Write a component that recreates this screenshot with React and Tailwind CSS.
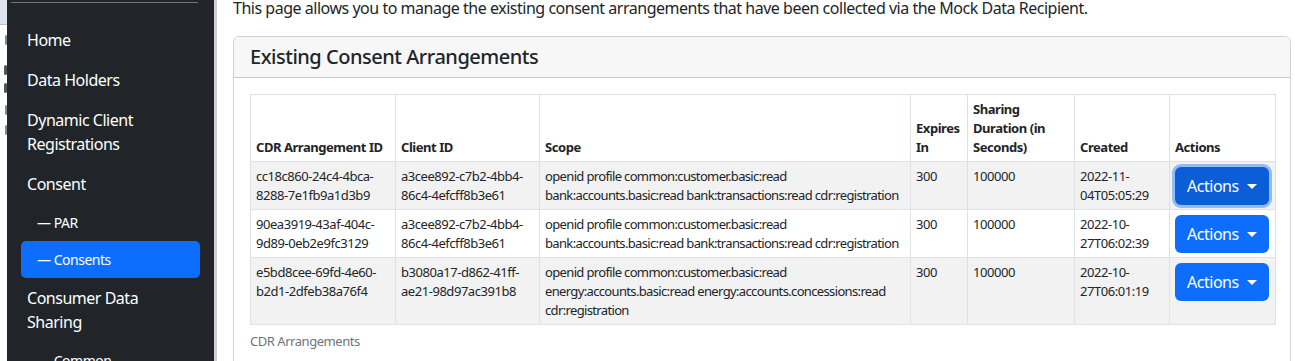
import React from "react";

const font = { fontFamily: '"Noto Sans", "Open Sans", sans-serif' };

const rows = [
  {
    id: "cc18c860",
    idLines: ["cc18c860-24c4-4bca-", "8288-7e1fb9a1d3b9"],
    client: ["a3cee892-c7b2-4bb4-", "86c4-4efcff8b3e61"],
    scope: ["openid profile common:customer.basic:read", "bank:accounts.basic:read bank:transactions:read cdr:registration"],
    created: ["2022-11-", "04T05:05:29"],
    striped: true,
    focused: true,
  },
  {
    id: "90ea3919",
    idLines: ["90ea3919-43af-404c-", "9d89-0eb2e9fc3129"],
    client: ["a3cee892-c7b2-4bb4-", "86c4-4efcff8b3e61"],
    scope: ["openid profile common:customer.basic:read", "bank:accounts.basic:read bank:transactions:read cdr:registration"],
    created: ["2022-10-", "27T06:02:39"],
    striped: false,
  },
  {
    id: "e5bd8cee",
    idLines: ["e5bd8cee-69fd-4e60-", "b2d1-2dfeb38a76f4"],
    client: ["b3080a17-d862-41ff-", "ae21-98d97ac391b8"],
    scope: ["openid profile common:customer.basic:read", "energy:accounts.basic:read energy:accounts.concessions:read", "cdr:registration"],
    created: ["2022-10-", "27T06:01:19"],
    striped: true,
  },
];

const Lines = ({ lines }) => (
  <>
    {lines.map((l, i) => (
      <div key={i} className="whitespace-nowrap">
        {l}
      </div>
    ))}
  </>
);

const ActionsButton = ({ focused }) => (
  <button
    className={
      "flex items-center rounded-[6px] px-[12px] py-[7px] text-[16px] leading-[24px] tracking-[-0.03em] text-white " +
      (focused ? "bg-[#0b5ed7] shadow-[0_0_0_3px_rgba(49,132,253,0.5)]" : "bg-[#0d6efd]")
    }
  >
    Actions
    <span className="ml-[8px] inline-block h-0 w-0 border-x-[5px] border-t-[5px] border-x-transparent border-t-white" />
  </button>
);

const NavItem = ({ children, active, sub }) => (
  <li
    className={
      "rounded-[5px] text-white " +
      (sub ? "py-[8px] pl-[16px] text-[14px] leading-[21px] " : "py-[8px] pl-[6px] text-[16px] leading-[24px] ") +
      (active ? "bg-[#0d6efd]" : "")
    }
  >
    {children}
  </li>
);

export default function App() {
  const th = "border border-[#dee2e6] px-[5px] pt-[5px] pb-[4px] text-left align-bottom font-bold";
  const td = "border border-[#dee2e6] px-[5px] pt-[5px] pb-[4px] align-top";

  return (
    <div
      className="flex h-[361px] w-[1295px] overflow-hidden bg-white text-[#212529] tracking-[-0.03em]"
      style={font}
    >
      {/* edge of window behind */}
      <div className="flex w-[7px] shrink-0 flex-col">
        <div className="h-[25px] bg-[#dce3ee] border-b border-[#b9c0ca]" />
        <div className="relative flex-1 bg-white">
          <div className="absolute left-[5px] top-[10px] h-[10px] w-[2px] rounded bg-[#8a8a8a]" />
          <div className="absolute left-[4px] top-[40px] h-[10px] w-[3px] rounded bg-[#555]" />
          <div className="absolute left-[4px] top-[58px] h-[10px] w-[3px] rounded bg-[#555]" />
          <div className="absolute left-[5px] top-[80px] h-[10px] w-[2px] rounded bg-[#8a8a8a]" />
          <div className="absolute left-[5px] top-[100px] h-[10px] w-[2px] rounded bg-[#8a8a8a]" />
        </div>
      </div>

      {/* sidebar */}
      <aside className="w-[207px] shrink-0 bg-[#212529]">
        <div className="ml-[4px] mr-[16px] mt-[2px] border-t border-[#6c757d]" />
        <ul className="mt-[17px] px-[14px]">
          <NavItem>Home</NavItem>
          <NavItem>Data Holders</NavItem>
          <NavItem>
            Dynamic Client
            <br />
            Registrations
          </NavItem>
          <NavItem>Consent</NavItem>
          <NavItem sub>— PAR</NavItem>
          <NavItem sub active>
            — Consents
          </NavItem>
          <NavItem>
            Consumer Data
            <br />
            Sharing
          </NavItem>
          <NavItem sub>— Common</NavItem>
        </ul>
      </aside>
      <div className="w-[3px] shrink-0 bg-[#d0d0d0]" />

      {/* main */}
      <main className="min-w-0 flex-1 pl-[16px] pr-[4px]">
        <p className="mt-[-4px] text-[16px] leading-[24px] whitespace-nowrap">
          This page allows you to manage the existing consent arrangements that have been collected via the Mock Data Recipient.
        </p>

        <div className="mt-[16px] rounded-[6px] border border-[rgba(0,0,0,0.175)]">
          <div className="rounded-t-[6px] border-b border-[rgba(0,0,0,0.175)] bg-[#f7f7f7] px-[16px] py-[8px]">
            <h5 className="text-[20px] font-medium leading-[24px]">Existing Consent Arrangements</h5>
          </div>
          <div className="p-[16px]">
            <table className="w-[1025px] table-fixed border-collapse border border-[#dee2e6] text-[13px] leading-[19px] tracking-[-0.035em] caption-bottom">
              <caption className="pt-[7px] text-left text-[13px] text-[#6c757d]">CDR Arrangements</caption>
              <colgroup>
                <col className="w-[145px]" />
                <col className="w-[144px]" />
                <col className="w-[371px]" />
                <col className="w-[57px]" />
                <col className="w-[107px]" />
                <col className="w-[95px]" />
                <col className="w-[106px]" />
              </colgroup>
              <thead>
                <tr>
                  <th className={th + " whitespace-nowrap"}>CDR Arrangement ID</th>
                  <th className={th}>Client ID</th>
                  <th className={th}>Scope</th>
                  <th className={th}>Expires In</th>
                  <th className={th}>Sharing Duration (in Seconds)</th>
                  <th className={th}>Created</th>
                  <th className={th}>Actions</th>
                </tr>
              </thead>
              <tbody>
                {rows.map((r) => (
                  <tr key={r.id} className={r.striped ? "bg-[#f2f2f2]" : "bg-white"}>
                    <td className={td}>
                      <Lines lines={r.idLines} />
                    </td>
                    <td className={td}>
                      <Lines lines={r.client} />
                    </td>
                    <td className={td + " tracking-[-0.05em]"}>
                      <Lines lines={r.scope} />
                    </td>
                    <td className={td}>300</td>
                    <td className={td}>100000</td>
                    <td className={td}>
                      <Lines lines={r.created} />
                    </td>
                    <td className={td}>
                      <ActionsButton focused={r.focused} />
                    </td>
                  </tr>
                ))}
              </tbody>
            </table>
          </div>
        </div>
      </main>
    </div>
  );
}
